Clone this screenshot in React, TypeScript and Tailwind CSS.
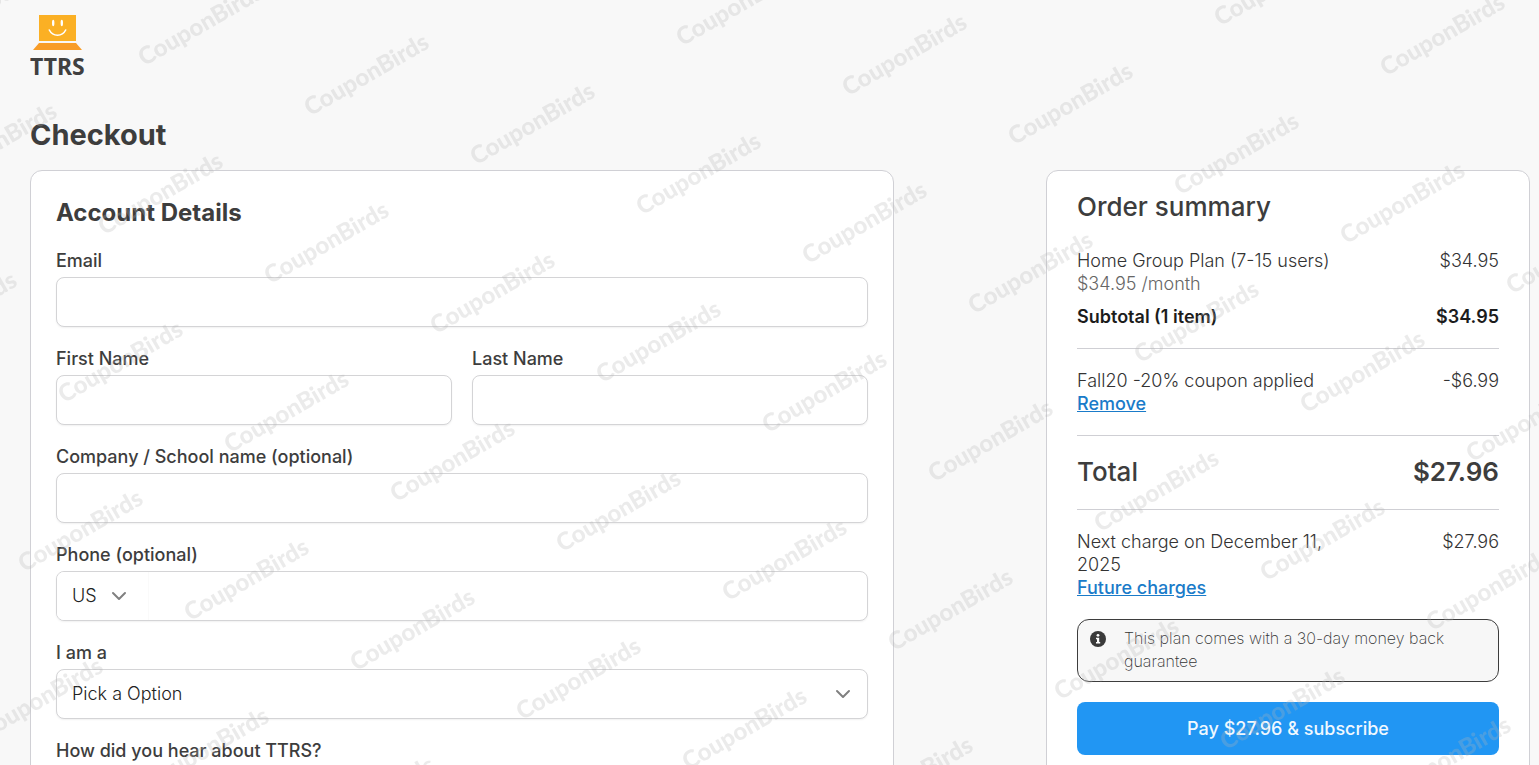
import type { ReactNode } from "react";
import { ChevronDown } from "lucide-react";

const inputClass =
  "block w-full h-[50px] rounded-lg border border-[#d4d4d6] bg-white px-[15px] text-lg text-[#222] shadow-[0_1px_2px_rgba(0,0,0,0.06)] outline-none focus:border-[#2196f3]";

// Distance between two stamps along each direction of the repeating mark
const stepAcross = [166, 49.5];
const stepDown = [-40, 168.5];

const stamps = Array.from({ length: 20 }, (_, row) =>
  Array.from({ length: 24 }, (_, col) => {
    const i = col - 6;
    const j = row - 8;
    return {
      key: `${i}:${j}`,
      left: 200 + i * stepAcross[0] + j * stepDown[0],
      top: 24 + i * stepAcross[1] + j * stepDown[1],
    };
  })
)
  .flat()
  .filter(
    (s) =>
      s.left > -60 &&
      s.top > -40 &&
      s.left < window.innerWidth + 60 &&
      s.top < window.innerHeight + 40
  );

function Watermark() {
  return (
    <div
      aria-hidden="true"
      className="pointer-events-none fixed inset-0 z-10 overflow-hidden"
    >
      {stamps.map(({ key, left, top }) => (
        <span
          key={key}
          className="absolute -translate-x-1/2 -translate-y-1/2 -rotate-30 whitespace-nowrap font-[Lato,sans-serif] text-2xl leading-6 font-black text-[rgba(180,180,180,0.27)]"
          style={{ left, top }}
        >
          CouponBirds
        </span>
      ))}
    </div>
  );
}

function Logo() {
  return (
    <a href="#" aria-label="TTRS" className="inline-block">
      <svg width="56" height="62" viewBox="0 0 56 62">
        <rect x="9" y="0" width="37" height="26" fill="#fbb024" />
        <path d="M9 28h37l6 7H3z" fill="#f89d28" />
        <ellipse cx="23.2" cy="8" rx="1.2" ry="3.2" fill="#fff" />
        <ellipse cx="31.8" cy="8" rx="1.2" ry="3.2" fill="#fff" />
        <path
          d="M19.3 15c3.6 7 12.8 7 16.4 0"
          fill="none"
          stroke="#fff"
          strokeWidth="1.6"
          strokeLinecap="round"
        />
        <text
          x="0"
          y="60"
          fill="#404040"
          className="font-['Noto_Sans',sans-serif] text-[23px] font-bold"
        >
          TTRS
        </text>
      </svg>
    </a>
  );
}

function Field({
  id,
  label,
  children,
}: {
  id: string;
  label: string;
  children: ReactNode;
}) {
  return (
    <div>
      <label
        htmlFor={id}
        className="mb-1 block text-lg leading-6 font-medium text-[#3d3d3d]"
      >
        {label}
      </label>
      {children}
    </div>
  );
}

function SelectField({
  id,
  label,
  placeholder,
}: {
  id: string;
  label: string;
  placeholder: string;
}) {
  return (
    <Field id={id} label={label}>
      <div className="relative">
        <select id={id} className={`${inputClass} appearance-none font-light`}>
          <option>{placeholder}</option>
        </select>
        <ChevronDown className="pointer-events-none absolute top-[13px] right-[13px] h-6 w-6 text-[#808080]" />
      </div>
    </Field>
  );
}

function AccountDetails() {
  return (
    <section className="rounded-xl border border-[#d0d0d5] bg-white px-[25px] pt-[26px] pb-[25px]">
      <h2 className="text-2xl leading-8 font-bold text-[#3d3d3d]">
        Account Details
      </h2>

      <form className="mt-5 space-y-5">
        <Field id="email" label="Email">
          <input id="email" type="email" className={inputClass} />
        </Field>

        <div className="grid grid-cols-2 gap-5">
          <Field id="first-name" label="First Name">
            <input id="first-name" type="text" className={inputClass} />
          </Field>
          <Field id="last-name" label="Last Name">
            <input id="last-name" type="text" className={inputClass} />
          </Field>
        </div>

        <Field id="company" label="Company / School name (optional)">
          <input id="company" type="text" className={inputClass} />
        </Field>

        <Field id="phone" label="Phone (optional)">
          <div className="flex h-[50px] overflow-hidden rounded-lg border border-[#d4d4d6] bg-white shadow-[0_1px_2px_rgba(0,0,0,0.06)]">
            <div className="relative w-[92px] border-r border-[#fafafa]">
              <select
                aria-label="Country"
                className="h-full w-full appearance-none bg-white pl-[15px] text-lg font-light text-[#222] outline-none"
              >
                <option>US</option>
              </select>
              <ChevronDown className="pointer-events-none absolute top-3 right-[17px] h-6 w-6 text-[#808080]" />
            </div>
            <input
              id="phone"
              type="tel"
              className="min-w-0 flex-1 px-[15px] text-lg outline-none"
            />
          </div>
        </Field>

        <SelectField id="role" label="I am a" placeholder="Pick a Option" />
        <SelectField
          id="source"
          label="How did you hear about TTRS?"
          placeholder="Pick a Option"
        />
      </form>
    </section>
  );
}

function SummaryLine({
  amount,
  children,
}: {
  amount: string;
  children: ReactNode;
}) {
  return (
    <div className="flex justify-between gap-4">
      <div className="max-w-[260px]">{children}</div>
      <span>{amount}</span>
    </div>
  );
}

function OrderSummary() {
  return (
    <section className="rounded-xl border border-[#d0d0d5] bg-white px-[30px] pt-[18px] pb-8 text-lg leading-[23px] font-light text-[#333]">
      <h2 className="text-[26px] leading-9 font-medium text-[#3d3d3d]">
        Order summary
      </h2>

      <div className="mt-6 border-b border-[#cfcfd4] pb-5">
        <SummaryLine amount="$34.95">
          <p>Home Group Plan (7-15 users)</p>
          <p className="text-[#666]">$34.95 /month</p>
        </SummaryLine>
        <div className="mt-[10px] font-semibold text-[#1c1c1c]">
          <SummaryLine amount="$34.95">Subtotal (1 item)</SummaryLine>
        </div>
      </div>

      <div className="border-b border-[#cfcfd4] py-5">
        <SummaryLine amount="-$6.99">
          <p>Fall20 -20% coupon applied</p>
          <a href="#" className="font-medium text-[#1a7bc9] underline">
            Remove
          </a>
        </SummaryLine>
      </div>

      <div className="flex justify-between border-b border-[#cfcfd4] pt-[17px] pb-[19px] text-[26px] leading-[37px] font-medium text-[#3d3d3d]">
        <span>Total</span>
        <span className="font-semibold">$27.96</span>
      </div>

      <div className="pt-5">
        <SummaryLine amount="$27.96">
          <p>Next charge on December 11, 2025</p>
          <a href="#" className="font-medium text-[#1a7bc9] underline">
            Future charges
          </a>
        </SummaryLine>
      </div>

      <div className="mt-5 flex gap-[18px] rounded-xl border border-[#3d3d3d] bg-[#f7f7f7] pt-[7px] pr-6 pb-2 pl-3">
        <svg
          viewBox="0 0 16 16"
          className="mt-1 h-4 w-4 shrink-0"
          fill="none"
        >
          <circle cx="8" cy="8" r="8" fill="#3a3a3a" />
          <circle cx="8" cy="4.3" r="1.4" fill="#fff" />
          <path d="M6 6.7h3.2v4.3h1v1.5H6V11h1V8.2H6z" fill="#fff" />
        </svg>
        <p className="text-base leading-[23px] font-extralight">
          This plan comes with a 30-day money back guarantee
        </p>
      </div>

      <button
        type="submit"
        className="mt-5 h-[53px] w-full rounded-lg bg-[#2196f3] text-lg font-medium text-[#f0f8ff]"
      >
        Pay $27.96 &amp; subscribe
      </button>
    </section>
  );
}

export default function App() {
  return (
    <div className="min-h-screen bg-[#f8f8f8] pt-[15px] pr-[9px] pb-10 pl-[30px] font-[Inter,sans-serif]">
      <header>
        <Logo />
      </header>

      <h1 className="mt-8 text-[29px] leading-10 font-bold text-[#3d3d3d]">
        Checkout
      </h1>

      <main className="mt-[15px] grid grid-cols-[864fr_484fr] items-start gap-x-[152px]">
        <AccountDetails />
        <OrderSummary />
      </main>

      <Watermark />
    </div>
  );
}
